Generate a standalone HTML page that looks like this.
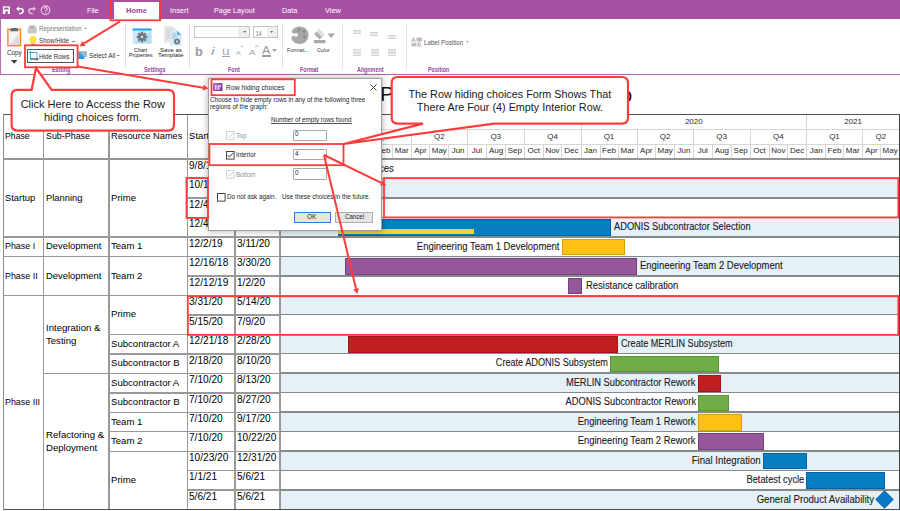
<!DOCTYPE html><html><head><meta charset="utf-8"><style>
*{margin:0;padding:0;box-sizing:border-box}
html,body{width:900px;height:511px;overflow:hidden;background:#fff;font-family:"Liberation Sans", sans-serif}
.a{position:absolute}
.t{position:absolute;white-space:nowrap;line-height:1}
</style></head><body><div class="a" style="left:0;top:0;width:900px;height:511px;overflow:hidden">
<div class="a" style="left:0.00px;top:0.00px;width:900.00px;height:18.60px;background:#A851A3"></div>
<div class="a" style="left:0.00px;top:18.60px;width:1.30px;height:56.00px;background:#B46FB0"></div>
<div class="a" style="left:0.00px;top:74.00px;width:900.00px;height:1.40px;background:#B066AC"></div>
<div class="a" style="left:114.00px;top:1.90px;width:44.50px;height:17.50px;background:#fff"></div>
<div class="a" style="left:114.00px;top:18.60px;width:44.50px;height:1.00px;background:#fff"></div>
<div class="t" style="left:86.90px;top:7.12px;font-size:7.6px;transform:scaleX(0.9481);transform-origin:0 0;color:#fff">File</div>
<div class="t" style="left:170.20px;top:7.12px;font-size:7.6px;transform:scaleX(0.9745);transform-origin:0 0;color:#fff">Insert</div>
<div class="t" style="left:214.20px;top:7.12px;font-size:7.6px;transform:scaleX(0.9575);transform-origin:0 0;color:#fff">Page Layout</div>
<div class="t" style="left:281.90px;top:7.12px;font-size:7.6px;transform:scaleX(0.9606);transform-origin:0 0;color:#fff">Data</div>
<div class="t" style="left:325.20px;top:7.12px;font-size:7.6px;transform:scaleX(0.9686);transform-origin:0 0;color:#fff">View</div>
<div class="t" style="left:125.90px;top:7.12px;font-size:7.6px;transform:scaleX(0.9861);transform-origin:0 0;font-weight:bold;color:#9C3F98">Home</div>
<svg class="a" style="left:0;top:0" width="60" height="18" viewBox="0 0 60 18">
<rect x="2.9" y="6.4" width="7.1" height="7.6" fill="#fff"/>
<rect x="4.3" y="7.6" width="4.2" height="1.9" fill="#A851A3"/>
<rect x="5.4" y="11.2" width="2.4" height="2.8" fill="#A851A3"/>
<g fill="none" stroke="#fff" stroke-width="1.5">
<path d="M18 8.8 h2.8 a2.3 2.3 0 0 1 0 4.6 h-1.6"/></g><path d="M16 8.8 L19 6.4 V11.2Z" fill="#fff"/>
<g fill="none" stroke="#E2C1DF" stroke-width="1.5"><path d="M34 8.8 h-2.8 a2.3 2.3 0 0 0 0 4.6 h1.6"/></g><path d="M36 8.8 L33 6.4 V11.2Z" fill="#E2C1DF"/>
<circle cx="45.5" cy="10.2" r="4.3" fill="none" stroke="#EBD3E9" stroke-width="1.1"/>
<path d="M44.1 9 a1.5 1.5 0 1 1 2.1 1.4 q-0.6 0.3 -0.6 1.1" fill="none" stroke="#EBD3E9" stroke-width="1.1"/><circle cx="45.6" cy="12.6" r="0.55" fill="#EBD3E9"/>
</svg>
<svg class="a" style="left:5px;top:26px" width="20" height="42" viewBox="0 0 20 42">
<rect x="2.9" y="3.2" width="12.6" height="16.5" fill="#F4F4F4" stroke="#F7861B" stroke-width="1.4"/>
<path d="M4.5 19 L14.5 7.5 V19 Z" fill="#DCDCDC"/>
<path d="M5.2 4.5 Q5.2 1.8 9.2 1.8 Q13.2 1.8 13.2 4.5 V5.2 H5.2Z" fill="#5B6B7B"/>
</svg>
<svg class="a" style="left:10.80px;top:60.10px" width="6.4" height="3.8"><path d="M0 0 H6.4 L3.2 3.8Z" fill="#3a3a3a"/></svg>
<div class="t" style="left:6.90px;top:48.66px;font-size:7.2px;transform:scaleX(0.8760);transform-origin:0 0;color:#333">Copy</div>
<svg class="a" style="left:26px;top:23px" width="12" height="12" viewBox="0 0 12 12">
<path d="M2 10.5 Q0.5 8 2 5.5 Q2.5 2 6 2 Q9.5 1.5 10.5 5 Q11.8 7.5 10 10.5Z" fill="#C9C9C9"/><path d="M4 3.5 h4 v2 h-4z" fill="#ADADAD"/>
</svg>
<div class="t" style="left:39.00px;top:24.76px;font-size:7.2px;transform:scaleX(0.8756);transform-origin:0 0;color:#777">Representation</div>
<svg class="a" style="left:83.70px;top:27.70px" width="3" height="1.8"><path d="M0 0 H3 L1.5 1.8Z" fill="#999"/></svg>
<svg class="a" style="left:28px;top:35px" width="10" height="12" viewBox="0 0 10 12">
<path d="M5 1 A3.6 3.6 0 0 1 7.5 7.3 V8.3 H2.5 V7.3 A3.6 3.6 0 0 1 5 1Z" fill="#FFE13D"/><rect x="3" y="8.6" width="4" height="2" fill="#8C8C8C"/>
</svg>
<div class="t" style="left:39.00px;top:37.36px;font-size:7.2px;transform:scaleX(0.8629);transform-origin:0 0;color:#333">Show/Hide</div>
<svg class="a" style="left:72.00px;top:40.60px" width="3" height="1.8"><path d="M0 0 H3 L1.5 1.8Z" fill="#666"/></svg>
<div class="a" style="left:27.00px;top:49.00px;width:47.00px;height:13.60px;border:1px solid #555;background:#fff"></div>
<svg class="a" style="left:28px;top:50px" width="11" height="11" viewBox="0 0 11 11">
<rect x="2.5" y="2.5" width="6.5" height="6.5" fill="none" stroke="#4A9FD8" stroke-width="0.9"/>
<path d="M0.8 2.5 h2 M2.5 0.8 v2" stroke="#4A9FD8" stroke-width="0.9"/>
<path d="M9 9 h1.5 M9 9 v1.5" stroke="#333" stroke-width="0.9"/><path d="M2.5 9 h6.5" stroke="#333" stroke-width="0.9"/>
</svg>
<div class="t" style="left:39.00px;top:52.56px;font-size:7.2px;transform:scaleX(0.8748);transform-origin:0 0;color:#333">Hide Rows</div>
<svg class="a" style="left:78px;top:51px" width="10" height="9" viewBox="0 0 10 9">
<rect x="0.5" y="0.5" width="8" height="7.5" fill="#23A0EE"/><path d="M0.5 0.5 h8 v7.5z" fill="#9FB4C4"/><rect x="6.5" y="6" width="2.5" height="2.5" fill="#fff"/>
</svg>
<div class="t" style="left:89.00px;top:51.96px;font-size:7.2px;transform:scaleX(0.8926);transform-origin:0 0;color:#333">Select All</div>
<svg class="a" style="left:117.30px;top:54.80px" width="2.6" height="1.6"><path d="M0 0 H2.6 L1.3 1.6Z" fill="#555"/></svg>
<div class="t" style="left:51.79px;top:67.43px;font-size:6.4px;transform:scaleX(0.8500);transform-origin:0 0;font-weight:bold;color:#9A45A2">Editing</div>
<div class="t" style="left:143.99px;top:67.43px;font-size:6.4px;transform:scaleX(0.8500);transform-origin:0 0;font-weight:bold;color:#9A45A2">Settings</div>
<div class="t" style="left:228.42px;top:67.43px;font-size:6.4px;transform:scaleX(0.8500);transform-origin:0 0;font-weight:bold;color:#9A45A2">Font</div>
<div class="t" style="left:300.40px;top:67.43px;font-size:6.4px;transform:scaleX(0.8500);transform-origin:0 0;font-weight:bold;color:#9A45A2">Format</div>
<div class="t" style="left:357.42px;top:67.43px;font-size:6.4px;transform:scaleX(0.8500);transform-origin:0 0;font-weight:bold;color:#9A45A2">Alignment</div>
<div class="t" style="left:428.28px;top:67.43px;font-size:6.4px;transform:scaleX(0.8500);transform-origin:0 0;font-weight:bold;color:#9A45A2">Position</div>
<div class="a" style="left:125.00px;top:24.00px;width:0.80px;height:45.00px;background:#E3E3E3"></div>
<div class="a" style="left:188.60px;top:24.00px;width:0.80px;height:45.00px;background:#E3E3E3"></div>
<div class="a" style="left:282.30px;top:24.00px;width:0.80px;height:45.00px;background:#E3E3E3"></div>
<div class="a" style="left:341.60px;top:24.00px;width:0.80px;height:45.00px;background:#E3E3E3"></div>
<div class="a" style="left:405.60px;top:24.00px;width:0.80px;height:45.00px;background:#E3E3E3"></div>
<svg class="a" style="left:131.5px;top:27.5px" width="20" height="16" viewBox="0 0 20 16">
<rect x="0.5" y="0.5" width="19" height="15" fill="#CDEBFA"/><path d="M0.5 15.5 L19.5 3 V15.5Z" fill="#B3DFF6"/><rect x="0.5" y="0.5" width="19" height="2" fill="#1EA5EC"/>
<g transform="translate(10 9)"><g fill="#6E7881">
<rect x="-1.2" y="-5.3" width="2.4" height="10.6"/><rect x="-1.2" y="-5.3" width="2.4" height="10.6" transform="rotate(45)"/>
<rect x="-1.2" y="-5.3" width="2.4" height="10.6" transform="rotate(90)"/><rect x="-1.2" y="-5.3" width="2.4" height="10.6" transform="rotate(135)"/>
<circle r="3.6"/></g><circle r="1.2" fill="#CDEBFA"/></g>
</svg>
<div class="t" style="left:133.80px;top:46.50px;font-size:6.2px;transform:scaleX(0.8793);transform-origin:0 0;color:#222">Chart</div>
<div class="t" style="left:128.70px;top:51.80px;font-size:6.2px;transform:scaleX(0.8337);transform-origin:0 0;color:#222">Properties</div>
<svg class="a" style="left:163px;top:25px" width="20" height="21" viewBox="0 0 20 21">
<path d="M1 1 h8.5 l3 3 v13.5 h-11.5z" fill="#E6E6E6"/><g stroke="#C4C4C4" stroke-width="0.7"><path d="M3 5h6M3 7h6M3 9h6M3 11h6M3 13h6"/></g>
<path d="M7 5.5 h7 l4.5 4.5 v10.5 h-11.5z" fill="#CFEAF8"/><path d="M14 5.5 l4.5 4.5 h-4.5z" fill="#4DB3EA"/>
<g stroke="#9AA7B0" stroke-width="0.7"><path d="M9 9h4M9 11h5M9 13h3"/></g>
<circle cx="14" cy="16.5" r="3" fill="#707B84"/><circle cx="14" cy="16.5" r="1.1" fill="#CFEAF8"/>
</svg>
<div class="t" style="left:159.50px;top:46.50px;font-size:6.2px;transform:scaleX(0.9757);transform-origin:0 0;color:#222">Save as</div>
<div class="t" style="left:157.80px;top:51.80px;font-size:6.2px;transform:scaleX(1.0122);transform-origin:0 0;color:#222">Template</div>
<div class="a" style="left:194.00px;top:26.30px;width:55.70px;height:11.70px;border:1px solid #C6C6C6;background:#fff"></div>
<div class="a" style="left:238.00px;top:27.30px;width:10.70px;height:9.70px;background:#F0F0F0"></div>
<svg class="a" style="left:242.70px;top:31.25px" width="3.2" height="1.9"><path d="M0 0 H3.2 L1.6 1.9Z" fill="#777"/></svg>
<div class="a" style="left:253.00px;top:26.30px;width:24.70px;height:11.70px;border:1px solid #C6C6C6;background:#fff"></div>
<div class="a" style="left:266.50px;top:27.30px;width:10.20px;height:9.70px;background:#F0F0F0"></div>
<svg class="a" style="left:270.40px;top:31.25px" width="3.2" height="1.9"><path d="M0 0 H3.2 L1.6 1.9Z" fill="#777"/></svg>
<div class="t" style="left:255.80px;top:29.52px;font-size:7px;transform:scaleX(0.7325);transform-origin:0 0;color:#777">14</div>
<div class="t" style="left:195.20px;top:45.57px;font-size:12.5px;transform:scaleX(1.0209);transform-origin:0 0;font-weight:bold;color:#9B9B9B">b</div>
<div class="t" style="left:210.80px;top:46.22px;font-size:11.5px;transform:scaleX(1.4439);transform-origin:0 0;color:#A6A6A6;font-style:italic">i</div>
<div class="t" style="left:222.00px;top:45.64px;font-size:11px;transform:scaleX(1.2245);transform-origin:0 0;color:#A6A6A6">u</div>
<div class="a" style="left:222.00px;top:55.70px;width:7.50px;height:1.00px;background:#A6A6A6"></div>
<div class="t" style="left:236.30px;top:50.79px;font-size:5.5px;transform:scaleX(1.2800);transform-origin:0 0;color:#A6A6A6">A</div>
<svg class="a" style="left:240.55px;top:45.50px" width="2.5" height="1.6"><path d="M0 0 H2.5 L1.25 1.6Z" fill="#A6A6A6"/></svg>
<div class="t" style="left:248.80px;top:48.68px;font-size:8px;transform:scaleX(1.2538);transform-origin:0 0;color:#A6A6A6">A</div>
<svg class="a" style="left:254.5px;top:44.5px" width="4" height="3"><path d="M0 2.5 L2 0.5 L4 2.5" fill="none" stroke="#A6A6A6" stroke-width="0.9"/></svg>
<div class="t" style="left:261.80px;top:45.14px;font-size:11px;transform:scaleX(1.1166);transform-origin:0 0;color:#9B9B9B">A</div>
<div class="a" style="left:261.50px;top:55.30px;width:9.20px;height:1.80px;background:#A0A0A0"></div>
<svg class="a" style="left:271.90px;top:48.60px" width="5" height="3.2"><path d="M0 0 H5 L2.5 3.2Z" fill="#A6A6A6"/></svg>
<svg class="a" style="left:290px;top:25px" width="20" height="21" viewBox="0 0 20 21">
<path d="M10 1.5 C15 1.5 18.5 5.5 18.5 10 C18.5 15.5 14.5 19 10 19 C5 19 1.5 15.5 1.5 13 C1.5 10.8 5 11 5 9.5 C5 8 1.8 8.8 1.8 7 C1.8 4 5.5 1.5 10 1.5Z" fill="#A8A8A8"/>
<circle cx="6" cy="10" r="1.8" fill="#fff"/><circle cx="9" cy="5" r="1.4" fill="#8A8A8A"/><circle cx="14" cy="6.5" r="1.4" fill="#8A8A8A"/><circle cx="14.5" cy="12" r="1.4" fill="#8A8A8A"/>
</svg>
<div class="t" style="left:287.00px;top:47.20px;font-size:6.2px;transform:scaleX(0.8889);transform-origin:0 0;color:#333">Format...</div>
<svg class="a" style="left:313px;top:28px" width="23" height="17" viewBox="0 0 23 17">
<path d="M6 1 l5.5 5.5 l-5 5 l-5.5 -5.5z" fill="#B0B0B0"/><path d="M6 1 l5.5 5.5 l-2.5 2.5 l-5.5-5.5z" fill="#E2E2E2"/>
<rect x="1" y="12" width="11.5" height="3.2" fill="#A8A8A8"/>
<path d="M14.5 5.5 h7.5 l-3.75 4.5z" fill="#A8A8A8"/>
</svg>
<div class="t" style="left:317.30px;top:47.20px;font-size:6.2px;transform:scaleX(0.8592);transform-origin:0 0;color:#333">Color</div>
<svg class="a" style="left:353px;top:29.5px" width="8" height="4.5"><rect x="0" y="0.0" width="8" height="0.9" fill="#CFCFCF"/><rect x="0" y="1.5" width="8" height="0.9" fill="#CFCFCF"/><rect x="0" y="3.0" width="8" height="0.9" fill="#CFCFCF"/></svg>
<svg class="a" style="left:370px;top:32px" width="8" height="4.5"><rect x="0" y="0.0" width="8" height="0.9" fill="#CFCFCF"/><rect x="0" y="1.5" width="8" height="0.9" fill="#CFCFCF"/><rect x="0" y="3.0" width="8" height="0.9" fill="#CFCFCF"/></svg>
<svg class="a" style="left:388px;top:34.5px" width="8" height="4.5"><rect x="0" y="0.0" width="8" height="0.9" fill="#CFCFCF"/><rect x="0" y="1.5" width="8" height="0.9" fill="#CFCFCF"/><rect x="0" y="3.0" width="8" height="0.9" fill="#CFCFCF"/></svg>
<svg class="a" style="left:353px;top:49px" width="8" height="7.5"><rect x="0" y="0.0" width="8" height="0.9" fill="#CFCFCF"/><rect x="0" y="1.5" width="8" height="0.9" fill="#CFCFCF"/><rect x="0" y="3.0" width="8" height="0.9" fill="#CFCFCF"/><rect x="0" y="4.5" width="8" height="0.9" fill="#CFCFCF"/><rect x="0" y="6.0" width="8" height="0.9" fill="#CFCFCF"/></svg>
<svg class="a" style="left:371px;top:49px" width="8" height="7.5"><rect x="0" y="0.0" width="8" height="0.9" fill="#CFCFCF"/><rect x="0" y="1.5" width="8" height="0.9" fill="#CFCFCF"/><rect x="0" y="3.0" width="8" height="0.9" fill="#CFCFCF"/><rect x="0" y="4.5" width="8" height="0.9" fill="#CFCFCF"/><rect x="0" y="6.0" width="8" height="0.9" fill="#CFCFCF"/></svg>
<svg class="a" style="left:388px;top:49px" width="8" height="7.5"><rect x="0" y="0.0" width="8" height="0.9" fill="#CFCFCF"/><rect x="0" y="1.5" width="8" height="0.9" fill="#CFCFCF"/><rect x="0" y="3.0" width="8" height="0.9" fill="#CFCFCF"/><rect x="0" y="4.5" width="8" height="0.9" fill="#CFCFCF"/><rect x="0" y="6.0" width="8" height="0.9" fill="#CFCFCF"/></svg>
<svg class="a" style="left:410.5px;top:37px" width="12" height="10" viewBox="0 0 12 10">
<path d="M0.5 5 L2.5 0.5 L4.5 5 M1.3 3.3 h2.4" fill="none" stroke="#9A9A9A" stroke-width="0.7"/><rect x="5.5" y="0.5" width="5.5" height="4" fill="#BDBDBD"/>
<rect x="0.5" y="5.8" width="5" height="3.6" fill="#BDBDBD"/><path d="M7 5.6 v4 h1.8 a1 1 0 0 0 0 -2 h-1.8 h1.5 a0.9 0.9 0 0 0 0 -2z" fill="none" stroke="#9A9A9A" stroke-width="0.6"/>
</svg>
<div class="t" style="left:423.70px;top:39.12px;font-size:7px;transform:scaleX(0.8915);transform-origin:0 0;color:#555">Label Position</div>
<svg class="a" style="left:465.90px;top:41.20px" width="2.6" height="1.6"><path d="M0 0 H2.6 L1.3 1.6Z" fill="#888"/></svg>
<div class="t" style="left:380.00px;top:83.00px;font-size:21px;color:#111">P</div>
<div class="t" style="left:620.50px;top:83.50px;font-size:21px;color:#111">o</div>
<div class="a" style="left:280.00px;top:178.47px;width:619.00px;height:19.47px;background:#E5F0F7"></div>
<div class="a" style="left:280.00px;top:217.41px;width:619.00px;height:19.47px;background:#E5F0F7"></div>
<div class="a" style="left:280.00px;top:256.35px;width:619.00px;height:19.47px;background:#E5F0F7"></div>
<div class="a" style="left:280.00px;top:295.29px;width:619.00px;height:19.47px;background:#E5F0F7"></div>
<div class="a" style="left:280.00px;top:334.23px;width:619.00px;height:19.47px;background:#E5F0F7"></div>
<div class="a" style="left:280.00px;top:373.17px;width:619.00px;height:19.47px;background:#E5F0F7"></div>
<div class="a" style="left:280.00px;top:412.11px;width:619.00px;height:19.47px;background:#E5F0F7"></div>
<div class="a" style="left:280.00px;top:451.05px;width:619.00px;height:19.47px;background:#E5F0F7"></div>
<div class="a" style="left:280.00px;top:489.99px;width:619.00px;height:19.47px;background:#E5F0F7"></div>
<div class="a" style="left:280.00px;top:129.30px;width:619.00px;height:0.90px;background:#D6D6D6"></div>
<div class="a" style="left:280.00px;top:144.00px;width:619.00px;height:0.90px;background:#D6D6D6"></div>
<div class="t" style="left:280.00px;top:147.30px;font-size:8px;color:#2A2A2A"><div style="width:18.94px;text-align:center">Sep</div></div>
<div class="a" style="left:298.54px;top:129.30px;width:0.90px;height:29.70px;background:#D6D6D6"></div>
<div class="t" style="left:298.94px;top:147.30px;font-size:8px;color:#2A2A2A"><div style="width:19.13px;text-align:center">Oct</div></div>
<div class="a" style="left:317.66px;top:144.00px;width:0.90px;height:15.00px;background:#D6D6D6"></div>
<div class="t" style="left:318.06px;top:147.30px;font-size:8px;color:#2A2A2A"><div style="width:18.51px;text-align:center">Nov</div></div>
<div class="a" style="left:336.17px;top:144.00px;width:0.90px;height:15.00px;background:#D6D6D6"></div>
<div class="t" style="left:336.57px;top:147.30px;font-size:8px;color:#2A2A2A"><div style="width:19.13px;text-align:center">Dec</div></div>
<div class="a" style="left:355.30px;top:114.50px;width:0.90px;height:44.50px;background:#D6D6D6"></div>
<div class="t" style="left:355.70px;top:147.30px;font-size:8px;color:#2A2A2A"><div style="width:19.13px;text-align:center">Jan</div></div>
<div class="a" style="left:374.43px;top:144.00px;width:0.90px;height:15.00px;background:#D6D6D6"></div>
<div class="t" style="left:374.83px;top:147.30px;font-size:8px;color:#2A2A2A"><div style="width:17.28px;text-align:center">Feb</div></div>
<div class="a" style="left:391.70px;top:144.00px;width:0.90px;height:15.00px;background:#D6D6D6"></div>
<div class="t" style="left:392.10px;top:147.30px;font-size:8px;color:#2A2A2A"><div style="width:19.13px;text-align:center">Mar</div></div>
<div class="a" style="left:410.83px;top:129.30px;width:0.90px;height:29.70px;background:#D6D6D6"></div>
<div class="t" style="left:411.23px;top:147.30px;font-size:8px;color:#2A2A2A"><div style="width:18.51px;text-align:center">Apr</div></div>
<div class="a" style="left:429.34px;top:144.00px;width:0.90px;height:15.00px;background:#D6D6D6"></div>
<div class="t" style="left:429.74px;top:147.30px;font-size:8px;color:#2A2A2A"><div style="width:19.13px;text-align:center">May</div></div>
<div class="a" style="left:448.46px;top:144.00px;width:0.90px;height:15.00px;background:#D6D6D6"></div>
<div class="t" style="left:448.86px;top:147.30px;font-size:8px;color:#2A2A2A"><div style="width:18.51px;text-align:center">Jun</div></div>
<div class="a" style="left:466.97px;top:129.30px;width:0.90px;height:29.70px;background:#D6D6D6"></div>
<div class="t" style="left:467.37px;top:147.30px;font-size:8px;color:#2A2A2A"><div style="width:19.13px;text-align:center">Jul</div></div>
<div class="a" style="left:486.10px;top:144.00px;width:0.90px;height:15.00px;background:#D6D6D6"></div>
<div class="t" style="left:486.50px;top:147.30px;font-size:8px;color:#2A2A2A"><div style="width:19.13px;text-align:center">Aug</div></div>
<div class="a" style="left:505.23px;top:144.00px;width:0.90px;height:15.00px;background:#D6D6D6"></div>
<div class="t" style="left:505.63px;top:147.30px;font-size:8px;color:#2A2A2A"><div style="width:18.51px;text-align:center">Sep</div></div>
<div class="a" style="left:523.74px;top:129.30px;width:0.90px;height:29.70px;background:#D6D6D6"></div>
<div class="t" style="left:524.14px;top:147.30px;font-size:8px;color:#2A2A2A"><div style="width:19.13px;text-align:center">Oct</div></div>
<div class="a" style="left:542.86px;top:144.00px;width:0.90px;height:15.00px;background:#D6D6D6"></div>
<div class="t" style="left:543.26px;top:147.30px;font-size:8px;color:#2A2A2A"><div style="width:18.51px;text-align:center">Nov</div></div>
<div class="a" style="left:561.37px;top:144.00px;width:0.90px;height:15.00px;background:#D6D6D6"></div>
<div class="t" style="left:561.77px;top:147.30px;font-size:8px;color:#2A2A2A"><div style="width:19.13px;text-align:center">Dec</div></div>
<div class="a" style="left:580.50px;top:114.50px;width:0.90px;height:44.50px;background:#D6D6D6"></div>
<div class="t" style="left:580.90px;top:147.30px;font-size:8px;color:#2A2A2A"><div style="width:19.13px;text-align:center">Jan</div></div>
<div class="a" style="left:599.63px;top:144.00px;width:0.90px;height:15.00px;background:#D6D6D6"></div>
<div class="t" style="left:600.03px;top:147.30px;font-size:8px;color:#2A2A2A"><div style="width:17.89px;text-align:center">Feb</div></div>
<div class="a" style="left:617.52px;top:144.00px;width:0.90px;height:15.00px;background:#D6D6D6"></div>
<div class="t" style="left:617.92px;top:147.30px;font-size:8px;color:#2A2A2A"><div style="width:19.13px;text-align:center">Mar</div></div>
<div class="a" style="left:636.65px;top:129.30px;width:0.90px;height:29.70px;background:#D6D6D6"></div>
<div class="t" style="left:637.05px;top:147.30px;font-size:8px;color:#2A2A2A"><div style="width:18.51px;text-align:center">Apr</div></div>
<div class="a" style="left:655.16px;top:144.00px;width:0.90px;height:15.00px;background:#D6D6D6"></div>
<div class="t" style="left:655.56px;top:147.30px;font-size:8px;color:#2A2A2A"><div style="width:19.13px;text-align:center">May</div></div>
<div class="a" style="left:674.28px;top:144.00px;width:0.90px;height:15.00px;background:#D6D6D6"></div>
<div class="t" style="left:674.68px;top:147.30px;font-size:8px;color:#2A2A2A"><div style="width:18.51px;text-align:center">Jun</div></div>
<div class="a" style="left:692.79px;top:129.30px;width:0.90px;height:29.70px;background:#D6D6D6"></div>
<div class="t" style="left:693.19px;top:147.30px;font-size:8px;color:#2A2A2A"><div style="width:19.13px;text-align:center">Jul</div></div>
<div class="a" style="left:711.92px;top:144.00px;width:0.90px;height:15.00px;background:#D6D6D6"></div>
<div class="t" style="left:712.32px;top:147.30px;font-size:8px;color:#2A2A2A"><div style="width:19.13px;text-align:center">Aug</div></div>
<div class="a" style="left:731.04px;top:144.00px;width:0.90px;height:15.00px;background:#D6D6D6"></div>
<div class="t" style="left:731.44px;top:147.30px;font-size:8px;color:#2A2A2A"><div style="width:18.51px;text-align:center">Sep</div></div>
<div class="a" style="left:749.55px;top:129.30px;width:0.90px;height:29.70px;background:#D6D6D6"></div>
<div class="t" style="left:749.95px;top:147.30px;font-size:8px;color:#2A2A2A"><div style="width:19.13px;text-align:center">Oct</div></div>
<div class="a" style="left:768.68px;top:144.00px;width:0.90px;height:15.00px;background:#D6D6D6"></div>
<div class="t" style="left:769.08px;top:147.30px;font-size:8px;color:#2A2A2A"><div style="width:18.51px;text-align:center">Nov</div></div>
<div class="a" style="left:787.19px;top:144.00px;width:0.90px;height:15.00px;background:#D6D6D6"></div>
<div class="t" style="left:787.59px;top:147.30px;font-size:8px;color:#2A2A2A"><div style="width:19.13px;text-align:center">Dec</div></div>
<div class="a" style="left:806.32px;top:114.50px;width:0.90px;height:44.50px;background:#D6D6D6"></div>
<div class="t" style="left:806.72px;top:147.30px;font-size:8px;color:#2A2A2A"><div style="width:19.13px;text-align:center">Jan</div></div>
<div class="a" style="left:825.44px;top:144.00px;width:0.90px;height:15.00px;background:#D6D6D6"></div>
<div class="t" style="left:825.84px;top:147.30px;font-size:8px;color:#2A2A2A"><div style="width:17.28px;text-align:center">Feb</div></div>
<div class="a" style="left:842.72px;top:144.00px;width:0.90px;height:15.00px;background:#D6D6D6"></div>
<div class="t" style="left:843.12px;top:147.30px;font-size:8px;color:#2A2A2A"><div style="width:19.13px;text-align:center">Mar</div></div>
<div class="a" style="left:861.85px;top:129.30px;width:0.90px;height:29.70px;background:#D6D6D6"></div>
<div class="t" style="left:862.25px;top:147.30px;font-size:8px;color:#2A2A2A"><div style="width:18.51px;text-align:center">Apr</div></div>
<div class="a" style="left:880.36px;top:144.00px;width:0.90px;height:15.00px;background:#D6D6D6"></div>
<div class="t" style="left:880.76px;top:147.30px;font-size:8px;color:#2A2A2A"><div style="width:18.74px;text-align:center">May</div></div>
<div class="t" style="left:280.00px;top:132.60px;font-size:8px;color:#2A2A2A"><div style="width:18.94px;text-align:center">Q3</div></div>
<div class="t" style="left:298.94px;top:132.60px;font-size:8px;color:#2A2A2A"><div style="width:56.76px;text-align:center">Q4</div></div>
<div class="t" style="left:280.00px;top:118.00px;font-size:8px;color:#2A2A2A"><div style="width:75.70px;text-align:center">2018</div></div>
<div class="t" style="left:355.70px;top:132.60px;font-size:8px;color:#2A2A2A"><div style="width:55.53px;text-align:center">Q1</div></div>
<div class="t" style="left:411.23px;top:132.60px;font-size:8px;color:#2A2A2A"><div style="width:56.15px;text-align:center">Q2</div></div>
<div class="t" style="left:467.37px;top:132.60px;font-size:8px;color:#2A2A2A"><div style="width:56.76px;text-align:center">Q3</div></div>
<div class="t" style="left:524.14px;top:132.60px;font-size:8px;color:#2A2A2A"><div style="width:56.76px;text-align:center">Q4</div></div>
<div class="t" style="left:355.70px;top:118.00px;font-size:8px;color:#2A2A2A"><div style="width:225.20px;text-align:center">2019</div></div>
<div class="t" style="left:580.90px;top:132.60px;font-size:8px;color:#2A2A2A"><div style="width:56.15px;text-align:center">Q1</div></div>
<div class="t" style="left:637.05px;top:132.60px;font-size:8px;color:#2A2A2A"><div style="width:56.15px;text-align:center">Q2</div></div>
<div class="t" style="left:693.19px;top:132.60px;font-size:8px;color:#2A2A2A"><div style="width:56.76px;text-align:center">Q3</div></div>
<div class="t" style="left:749.95px;top:132.60px;font-size:8px;color:#2A2A2A"><div style="width:56.76px;text-align:center">Q4</div></div>
<div class="t" style="left:580.90px;top:118.00px;font-size:8px;color:#2A2A2A"><div style="width:225.82px;text-align:center">2020</div></div>
<div class="t" style="left:806.72px;top:132.60px;font-size:8px;color:#2A2A2A"><div style="width:55.53px;text-align:center">Q1</div></div>
<div class="t" style="left:862.25px;top:132.60px;font-size:8px;color:#2A2A2A"><div style="width:37.25px;text-align:center">Q2</div></div>
<div class="t" style="left:806.72px;top:118.00px;font-size:8px;color:#2A2A2A"><div style="width:92.78px;text-align:center">2021</div></div>
<div class="a" style="left:3.00px;top:113.90px;width:897.00px;height:1.20px;background:#505050"></div>
<div class="a" style="left:3.00px;top:508.70px;width:897.00px;height:1.30px;background:#505050"></div>
<div class="a" style="left:2.70px;top:113.90px;width:1.20px;height:396.50px;background:#8A8A8A"></div>
<div class="a" style="left:898.80px;top:113.90px;width:1.60px;height:396.50px;background:#404040"></div>
<div class="a" style="left:3.00px;top:158.30px;width:896.00px;height:1.40px;background:#959595"></div>
<div class="a" style="left:42.80px;top:114.50px;width:1.40px;height:394.90px;background:#999"></div>
<div class="a" style="left:108.30px;top:114.50px;width:1.40px;height:394.90px;background:#999"></div>
<div class="a" style="left:186.80px;top:114.50px;width:1.40px;height:394.90px;background:#999"></div>
<div class="a" style="left:234.30px;top:114.50px;width:1.40px;height:394.90px;background:#999"></div>
<div class="a" style="left:279.30px;top:114.50px;width:1.40px;height:394.90px;background:#999"></div>
<div class="a" style="left:187.50px;top:177.97px;width:92.50px;height:1.40px;background:#999"></div>
<div class="a" style="left:280.00px;top:177.77px;width:619.00px;height:1.40px;background:#858A8A"></div>
<div class="a" style="left:187.50px;top:197.44px;width:92.50px;height:1.40px;background:#999"></div>
<div class="a" style="left:280.00px;top:197.24px;width:619.00px;height:1.40px;background:#858A8A"></div>
<div class="a" style="left:187.50px;top:216.91px;width:92.50px;height:1.40px;background:#999"></div>
<div class="a" style="left:280.00px;top:216.71px;width:619.00px;height:1.40px;background:#858A8A"></div>
<div class="a" style="left:3.00px;top:236.38px;width:40.50px;height:1.40px;background:#999"></div>
<div class="a" style="left:43.50px;top:236.38px;width:65.50px;height:1.40px;background:#999"></div>
<div class="a" style="left:109.00px;top:236.38px;width:78.50px;height:1.40px;background:#999"></div>
<div class="a" style="left:187.50px;top:236.38px;width:92.50px;height:1.40px;background:#999"></div>
<div class="a" style="left:280.00px;top:236.18px;width:619.00px;height:1.40px;background:#858A8A"></div>
<div class="a" style="left:3.00px;top:255.85px;width:40.50px;height:1.40px;background:#999"></div>
<div class="a" style="left:43.50px;top:255.85px;width:65.50px;height:1.40px;background:#999"></div>
<div class="a" style="left:109.00px;top:255.85px;width:78.50px;height:1.40px;background:#999"></div>
<div class="a" style="left:187.50px;top:255.85px;width:92.50px;height:1.40px;background:#999"></div>
<div class="a" style="left:280.00px;top:255.65px;width:619.00px;height:1.40px;background:#858A8A"></div>
<div class="a" style="left:187.50px;top:275.32px;width:92.50px;height:1.40px;background:#999"></div>
<div class="a" style="left:280.00px;top:275.12px;width:619.00px;height:1.40px;background:#858A8A"></div>
<div class="a" style="left:3.00px;top:294.79px;width:40.50px;height:1.40px;background:#999"></div>
<div class="a" style="left:43.50px;top:294.79px;width:65.50px;height:1.40px;background:#999"></div>
<div class="a" style="left:109.00px;top:294.79px;width:78.50px;height:1.40px;background:#999"></div>
<div class="a" style="left:187.50px;top:294.79px;width:92.50px;height:1.40px;background:#999"></div>
<div class="a" style="left:280.00px;top:294.59px;width:619.00px;height:1.40px;background:#858A8A"></div>
<div class="a" style="left:187.50px;top:314.26px;width:92.50px;height:1.40px;background:#999"></div>
<div class="a" style="left:280.00px;top:314.06px;width:619.00px;height:1.40px;background:#858A8A"></div>
<div class="a" style="left:109.00px;top:333.73px;width:78.50px;height:1.40px;background:#999"></div>
<div class="a" style="left:187.50px;top:333.73px;width:92.50px;height:1.40px;background:#999"></div>
<div class="a" style="left:280.00px;top:333.53px;width:619.00px;height:1.40px;background:#858A8A"></div>
<div class="a" style="left:109.00px;top:353.20px;width:78.50px;height:1.40px;background:#999"></div>
<div class="a" style="left:187.50px;top:353.20px;width:92.50px;height:1.40px;background:#999"></div>
<div class="a" style="left:280.00px;top:353.00px;width:619.00px;height:1.40px;background:#858A8A"></div>
<div class="a" style="left:43.50px;top:372.67px;width:65.50px;height:1.40px;background:#999"></div>
<div class="a" style="left:109.00px;top:372.67px;width:78.50px;height:1.40px;background:#999"></div>
<div class="a" style="left:187.50px;top:372.67px;width:92.50px;height:1.40px;background:#999"></div>
<div class="a" style="left:280.00px;top:372.47px;width:619.00px;height:1.40px;background:#858A8A"></div>
<div class="a" style="left:109.00px;top:392.14px;width:78.50px;height:1.40px;background:#999"></div>
<div class="a" style="left:187.50px;top:392.14px;width:92.50px;height:1.40px;background:#999"></div>
<div class="a" style="left:280.00px;top:391.94px;width:619.00px;height:1.40px;background:#858A8A"></div>
<div class="a" style="left:109.00px;top:411.61px;width:78.50px;height:1.40px;background:#999"></div>
<div class="a" style="left:187.50px;top:411.61px;width:92.50px;height:1.40px;background:#999"></div>
<div class="a" style="left:280.00px;top:411.41px;width:619.00px;height:1.40px;background:#858A8A"></div>
<div class="a" style="left:109.00px;top:431.08px;width:78.50px;height:1.40px;background:#999"></div>
<div class="a" style="left:187.50px;top:431.08px;width:92.50px;height:1.40px;background:#999"></div>
<div class="a" style="left:280.00px;top:430.88px;width:619.00px;height:1.40px;background:#858A8A"></div>
<div class="a" style="left:109.00px;top:450.55px;width:78.50px;height:1.40px;background:#999"></div>
<div class="a" style="left:187.50px;top:450.55px;width:92.50px;height:1.40px;background:#999"></div>
<div class="a" style="left:280.00px;top:450.35px;width:619.00px;height:1.40px;background:#858A8A"></div>
<div class="a" style="left:187.50px;top:470.02px;width:92.50px;height:1.40px;background:#999"></div>
<div class="a" style="left:280.00px;top:469.82px;width:619.00px;height:1.40px;background:#858A8A"></div>
<div class="a" style="left:187.50px;top:489.49px;width:92.50px;height:1.40px;background:#999"></div>
<div class="a" style="left:280.00px;top:489.29px;width:619.00px;height:1.40px;background:#858A8A"></div>
<div class="t" style="left:5.00px;top:131.43px;font-size:9.95px;transform:scaleX(0.8744);transform-origin:0 0;color:#000">Phase</div>
<div class="t" style="left:45.60px;top:131.43px;font-size:9.95px;transform:scaleX(0.8945);transform-origin:0 0;color:#000">Sub-Phase</div>
<div class="t" style="left:110.80px;top:131.43px;font-size:9.95px;transform:scaleX(0.9296);transform-origin:0 0;color:#000">Resource Names</div>
<div class="t" style="left:189.30px;top:131.43px;font-size:9.95px;transform:scaleX(0.9648);transform-origin:0 0;color:#000">Start Date</div>
<div class="t" style="left:236.60px;top:131.43px;font-size:9.95px;transform:scaleX(0.9648);transform-origin:0 0;color:#000">End Date</div>
<div class="t" style="left:4.80px;top:192.67px;font-size:9.95px;transform:scaleX(0.9447);transform-origin:0 0;color:#000">Startup</div>
<div class="t" style="left:4.80px;top:241.34px;font-size:9.95px;transform:scaleX(0.8945);transform-origin:0 0;color:#000">Phase I</div>
<div class="t" style="left:4.80px;top:270.55px;font-size:9.95px;transform:scaleX(0.8945);transform-origin:0 0;color:#000">Phase II</div>
<div class="t" style="left:4.80px;top:397.10px;font-size:9.95px;transform:scaleX(0.8945);transform-origin:0 0;color:#000">Phase III</div>
<div class="t" style="left:45.60px;top:192.67px;font-size:9.95px;transform:scaleX(0.9447);transform-origin:0 0;color:#000">Planning</div>
<div class="t" style="left:45.60px;top:241.34px;font-size:9.95px;transform:scaleX(0.9447);transform-origin:0 0;color:#000">Development</div>
<div class="t" style="left:45.60px;top:270.55px;font-size:9.95px;transform:scaleX(0.9447);transform-origin:0 0;color:#000">Development</div>
<div class="t" style="left:45.60px;top:323.26px;font-size:9.95px;transform:scaleX(0.9648);transform-origin:0 0;color:#000">Integration &amp;</div>
<div class="t" style="left:45.60px;top:335.86px;font-size:9.95px;transform:scaleX(0.9648);transform-origin:0 0;color:#000">Testing</div>
<div class="t" style="left:45.60px;top:430.34px;font-size:9.95px;transform:scaleX(0.9648);transform-origin:0 0;color:#000">Refactoring &amp;</div>
<div class="t" style="left:45.60px;top:442.94px;font-size:9.95px;transform:scaleX(0.9648);transform-origin:0 0;color:#000">Deployment</div>
<div class="t" style="left:110.80px;top:192.67px;font-size:9.95px;transform:scaleX(0.9648);transform-origin:0 0;color:#000">Prime</div>
<div class="t" style="left:110.80px;top:241.34px;font-size:9.95px;transform:scaleX(0.9648);transform-origin:0 0;color:#000">Team 1</div>
<div class="t" style="left:110.80px;top:270.55px;font-size:9.95px;transform:scaleX(0.9648);transform-origin:0 0;color:#000">Team 2</div>
<div class="t" style="left:110.80px;top:309.49px;font-size:9.95px;transform:scaleX(0.9648);transform-origin:0 0;color:#000">Prime</div>
<div class="t" style="left:110.80px;top:338.69px;font-size:9.95px;transform:scaleX(0.9648);transform-origin:0 0;color:#000">Subcontractor A</div>
<div class="t" style="left:110.80px;top:358.16px;font-size:9.95px;transform:scaleX(0.9648);transform-origin:0 0;color:#000">Subcontractor B</div>
<div class="t" style="left:110.80px;top:377.63px;font-size:9.95px;transform:scaleX(0.9648);transform-origin:0 0;color:#000">Subcontractor A</div>
<div class="t" style="left:110.80px;top:397.10px;font-size:9.95px;transform:scaleX(0.9648);transform-origin:0 0;color:#000">Subcontractor B</div>
<div class="t" style="left:110.80px;top:416.57px;font-size:9.95px;transform:scaleX(0.9648);transform-origin:0 0;color:#000">Team 1</div>
<div class="t" style="left:110.80px;top:436.04px;font-size:9.95px;transform:scaleX(0.9648);transform-origin:0 0;color:#000">Team 2</div>
<div class="t" style="left:110.80px;top:474.98px;font-size:9.95px;transform:scaleX(0.9648);transform-origin:0 0;color:#000">Prime</div>
<div class="t" style="left:189.20px;top:159.88px;font-size:10.6px;transform:scaleX(0.9528);transform-origin:0 0;color:#000">9/8/18</div>
<div class="t" style="left:236.60px;top:159.88px;font-size:10.6px;transform:scaleX(0.9528);transform-origin:0 0;color:#000">10/1/18</div>
<div class="t" style="left:189.20px;top:179.35px;font-size:10.6px;transform:scaleX(0.9528);transform-origin:0 0;color:#000">10/1/18</div>
<div class="t" style="left:236.60px;top:179.35px;font-size:10.6px;transform:scaleX(0.9528);transform-origin:0 0;color:#000">12/3/18</div>
<div class="t" style="left:189.20px;top:198.82px;font-size:10.6px;transform:scaleX(0.9528);transform-origin:0 0;color:#000">12/4/18</div>
<div class="t" style="left:236.60px;top:198.82px;font-size:10.6px;transform:scaleX(0.9528);transform-origin:0 0;color:#000">12/20/18</div>
<div class="t" style="left:189.20px;top:218.29px;font-size:10.6px;transform:scaleX(0.9528);transform-origin:0 0;color:#000">12/4/18</div>
<div class="t" style="left:236.60px;top:218.29px;font-size:10.6px;transform:scaleX(0.9528);transform-origin:0 0;color:#000">2/17/20</div>
<div class="t" style="left:189.20px;top:237.76px;font-size:10.6px;transform:scaleX(0.9528);transform-origin:0 0;color:#000">12/2/19</div>
<div class="t" style="left:236.60px;top:237.76px;font-size:10.6px;transform:scaleX(0.9528);transform-origin:0 0;color:#000">3/11/20</div>
<div class="t" style="left:189.20px;top:257.23px;font-size:10.6px;transform:scaleX(0.9528);transform-origin:0 0;color:#000">12/16/18</div>
<div class="t" style="left:236.60px;top:257.23px;font-size:10.6px;transform:scaleX(0.9528);transform-origin:0 0;color:#000">3/30/20</div>
<div class="t" style="left:189.20px;top:276.70px;font-size:10.6px;transform:scaleX(0.9528);transform-origin:0 0;color:#000">12/12/19</div>
<div class="t" style="left:236.60px;top:276.70px;font-size:10.6px;transform:scaleX(0.9528);transform-origin:0 0;color:#000">1/2/20</div>
<div class="t" style="left:189.20px;top:296.17px;font-size:10.6px;transform:scaleX(0.9528);transform-origin:0 0;color:#000">3/31/20</div>
<div class="t" style="left:236.60px;top:296.17px;font-size:10.6px;transform:scaleX(0.9528);transform-origin:0 0;color:#000">5/14/20</div>
<div class="t" style="left:189.20px;top:315.64px;font-size:10.6px;transform:scaleX(0.9528);transform-origin:0 0;color:#000">5/15/20</div>
<div class="t" style="left:236.60px;top:315.64px;font-size:10.6px;transform:scaleX(0.9528);transform-origin:0 0;color:#000">7/9/20</div>
<div class="t" style="left:189.20px;top:335.11px;font-size:10.6px;transform:scaleX(0.9528);transform-origin:0 0;color:#000">12/21/18</div>
<div class="t" style="left:236.60px;top:335.11px;font-size:10.6px;transform:scaleX(0.9528);transform-origin:0 0;color:#000">2/28/20</div>
<div class="t" style="left:189.20px;top:354.58px;font-size:10.6px;transform:scaleX(0.9528);transform-origin:0 0;color:#000">2/18/20</div>
<div class="t" style="left:236.60px;top:354.58px;font-size:10.6px;transform:scaleX(0.9528);transform-origin:0 0;color:#000">8/10/20</div>
<div class="t" style="left:189.20px;top:374.05px;font-size:10.6px;transform:scaleX(0.9528);transform-origin:0 0;color:#000">7/10/20</div>
<div class="t" style="left:236.60px;top:374.05px;font-size:10.6px;transform:scaleX(0.9528);transform-origin:0 0;color:#000">8/13/20</div>
<div class="t" style="left:189.20px;top:393.52px;font-size:10.6px;transform:scaleX(0.9528);transform-origin:0 0;color:#000">7/10/20</div>
<div class="t" style="left:236.60px;top:393.52px;font-size:10.6px;transform:scaleX(0.9528);transform-origin:0 0;color:#000">8/27/20</div>
<div class="t" style="left:189.20px;top:412.99px;font-size:10.6px;transform:scaleX(0.9528);transform-origin:0 0;color:#000">7/10/20</div>
<div class="t" style="left:236.60px;top:412.99px;font-size:10.6px;transform:scaleX(0.9528);transform-origin:0 0;color:#000">9/17/20</div>
<div class="t" style="left:189.20px;top:432.46px;font-size:10.6px;transform:scaleX(0.9528);transform-origin:0 0;color:#000">7/10/20</div>
<div class="t" style="left:236.60px;top:432.46px;font-size:10.6px;transform:scaleX(0.9528);transform-origin:0 0;color:#000">10/22/20</div>
<div class="t" style="left:189.20px;top:451.93px;font-size:10.6px;transform:scaleX(0.9528);transform-origin:0 0;color:#000">10/23/20</div>
<div class="t" style="left:236.60px;top:451.93px;font-size:10.6px;transform:scaleX(0.9528);transform-origin:0 0;color:#000">12/31/20</div>
<div class="t" style="left:189.20px;top:471.40px;font-size:10.6px;transform:scaleX(0.9528);transform-origin:0 0;color:#000">1/1/21</div>
<div class="t" style="left:236.60px;top:471.40px;font-size:10.6px;transform:scaleX(0.9528);transform-origin:0 0;color:#000">5/6/21</div>
<div class="t" style="left:189.20px;top:490.87px;font-size:10.6px;transform:scaleX(0.9528);transform-origin:0 0;color:#000">5/6/21</div>
<div class="t" style="left:236.60px;top:490.87px;font-size:10.6px;transform:scaleX(0.9528);transform-origin:0 0;color:#000">5/6/21</div>
<div class="a" style="left:337.82px;top:219.31px;width:272.97px;height:16.50px;background:#077EC2;border:1px solid #0062A8"></div>
<div class="t" style="left:614.30px;top:222.19px;font-size:10.0px;transform:scaleX(0.9270);transform-origin:0 0;color:#1A1A1A;-webkit-text-stroke:0.1px #1A1A1A">ADONIS Subcontractor Selection</div>
<div class="a" style="left:561.79px;top:238.78px;width:63.20px;height:16.50px;background:#FDC113;border:1px solid #DDA00A"></div>
<div class="t" style="right:340.51px;top:241.66px;font-size:10.0px;transform:scaleX(0.9480);transform-origin:100% 0;color:#1A1A1A;-webkit-text-stroke:0.1px #1A1A1A">Engineering Team 1 Development</div>
<div class="a" style="left:345.23px;top:258.25px;width:291.48px;height:16.50px;background:#97579B;border:1px solid #74407A"></div>
<div class="t" style="left:640.21px;top:261.14px;font-size:10.0px;transform:scaleX(0.9480);transform-origin:0 0;color:#1A1A1A;-webkit-text-stroke:0.1px #1A1A1A">Engineering Team 2 Development</div>
<div class="a" style="left:567.96px;top:277.72px;width:14.46px;height:16.50px;background:#97579B;border:1px solid #74407A"></div>
<div class="t" style="left:585.92px;top:280.61px;font-size:10.0px;transform:scaleX(0.9440);transform-origin:0 0;color:#1A1A1A;-webkit-text-stroke:0.1px #1A1A1A">Resistance calibration</div>
<div class="a" style="left:348.31px;top:336.13px;width:269.27px;height:16.50px;background:#C21F23;border:1px solid #A0151A"></div>
<div class="t" style="left:621.09px;top:339.02px;font-size:10.0px;transform:scaleX(0.9080);transform-origin:0 0;color:#1A1A1A;-webkit-text-stroke:0.1px #1A1A1A">Create MERLIN Subsystem</div>
<div class="a" style="left:609.92px;top:355.60px;width:108.86px;height:16.50px;background:#70AD47;border:1px solid #5A9437"></div>
<div class="t" style="right:292.38px;top:358.49px;font-size:10.0px;transform:scaleX(0.9120);transform-origin:100% 0;color:#1A1A1A;-webkit-text-stroke:0.1px #1A1A1A">Create ADONIS Subsystem</div>
<div class="a" style="left:698.14px;top:375.07px;width:22.48px;height:16.50px;background:#C21F23;border:1px solid #A0151A"></div>
<div class="t" style="right:204.16px;top:377.95px;font-size:10.0px;transform:scaleX(0.9290);transform-origin:100% 0;color:#1A1A1A;-webkit-text-stroke:0.1px #1A1A1A">MERLIN Subcontractor Rework</div>
<div class="a" style="left:698.14px;top:394.54px;width:31.12px;height:16.50px;background:#70AD47;border:1px solid #5A9437"></div>
<div class="t" style="right:204.16px;top:397.43px;font-size:10.0px;transform:scaleX(0.9320);transform-origin:100% 0;color:#1A1A1A;-webkit-text-stroke:0.1px #1A1A1A">ADONIS Subcontractor Rework</div>
<div class="a" style="left:698.14px;top:414.01px;width:44.07px;height:16.50px;background:#FDC113;border:1px solid #DDA00A"></div>
<div class="t" style="right:204.16px;top:416.90px;font-size:10.0px;transform:scaleX(0.9380);transform-origin:100% 0;color:#1A1A1A;-webkit-text-stroke:0.1px #1A1A1A">Engineering Team 1 Rework</div>
<div class="a" style="left:698.14px;top:433.48px;width:65.67px;height:16.50px;background:#97579B;border:1px solid #74407A"></div>
<div class="t" style="right:204.16px;top:436.37px;font-size:10.0px;transform:scaleX(0.9380);transform-origin:100% 0;color:#1A1A1A;-webkit-text-stroke:0.1px #1A1A1A">Engineering Team 2 Rework</div>
<div class="a" style="left:762.93px;top:452.95px;width:44.07px;height:16.50px;background:#077EC2;border:1px solid #0062A8"></div>
<div class="t" style="right:139.37px;top:455.83px;font-size:10.0px;transform:scaleX(0.9620);transform-origin:100% 0;color:#1A1A1A;-webkit-text-stroke:0.1px #1A1A1A">Final Integration</div>
<div class="a" style="left:806.12px;top:472.42px;width:78.62px;height:16.50px;background:#077EC2;border:1px solid #0062A8"></div>
<div class="t" style="right:96.18px;top:475.31px;font-size:10.0px;transform:scaleX(0.9280);transform-origin:100% 0;color:#1A1A1A;-webkit-text-stroke:0.1px #1A1A1A">Betatest cycle</div>
<div class="a" style="left:338.22px;top:228.91px;width:136.00px;height:5.40px;background:#F5D22A"></div>
<div class="t" style="right:506.50px;top:163.78px;font-size:10.0px;transform:scaleX(0.9500);transform-origin:100% 0;color:#1A1A1A;-webkit-text-stroke:0.1px #1A1A1A">Resources</div>
<svg class="a" style="left:874.80px;top:490.40px" width="19" height="19"><path d="M9.5 0.8 L18.2 9.5 L9.5 18.2 L0.8 9.5Z" fill="#0A78C4" stroke="#0062A8" stroke-width="1"/></svg>
<div class="t" style="right:25.90px;top:494.78px;font-size:10.0px;transform:scaleX(0.9620);transform-origin:100% 0;color:#1A1A1A;-webkit-text-stroke:0.1px #1A1A1A">General Product Availability</div>
<div class="a" style="left:208.4px;top:78.2px;width:173.79999999999998px;height:153.0px;background:#fff;border:1px solid #A0A0A0;box-shadow:0 0 6px 1px rgba(0,0,0,0.25)"></div>
<svg class="a" style="left:213.3px;top:82.8px" width="9.5" height="8.5" viewBox="0 0 9.5 8.5">
<defs><linearGradient id="ig" x1="0" y1="0" x2="1" y2="1"><stop offset="0" stop-color="#B26FC0"/><stop offset="1" stop-color="#7A2C8E"/></linearGradient></defs>
<rect x="0" y="0" width="9.5" height="8.5" fill="url(#ig)"/><rect x="1.8" y="1.8" width="1.8" height="5" fill="#EBD2F0"/><path d="M4.6 2.3 h3.3 v1.8 h-1.5 v2.8 h-1.8z" fill="#EBD2F0"/></svg>
<div class="t" style="left:225.80px;top:84.07px;font-size:7.3px;transform:scaleX(0.9279);transform-origin:0 0;color:#1E1E1E">Row hiding choices</div>
<svg class="a" style="left:370.3px;top:83.6px" width="7" height="7"><path d="M0.5 0.5 L6.5 6.5 M6.5 0.5 L0.5 6.5" stroke="#333" stroke-width="0.9"/></svg>
<div class="t" style="left:210.00px;top:96.69px;font-size:6.8px;transform:scaleX(0.9305);transform-origin:0 0;color:#1E1E1E">Choose to hide empty rows in any of the following three</div>
<div class="t" style="left:210.00px;top:103.69px;font-size:6.8px;transform:scaleX(0.9296);transform-origin:0 0;color:#1E1E1E">regions of the graph:</div>
<div class="t" style="left:271.20px;top:117.19px;font-size:6.8px;transform:scaleX(0.9233);transform-origin:0 0;color:#1E1E1E">Number of empty rows found</div>
<div class="a" style="left:271.20px;top:123.20px;width:80.60px;height:0.80px;background:#555"></div>
<svg class="a" style="left:225.6px;top:131.2px" width="9" height="9" viewBox="0 0 9 9"><rect x="0.5" y="0.5" width="7.6" height="7.6" fill="#fff" stroke="#CFCFCF" stroke-width="0.9"/><path d="M1.6 4.2 L3.5 6.1 L7.1 2" fill="none" stroke="#C8C8C8" stroke-width="0.9"/></svg>
<div class="t" style="left:236.10px;top:132.22px;font-size:7px;transform:scaleX(0.9573);transform-origin:0 0;color:#8F8F8F">Top</div>
<svg class="a" style="left:225.6px;top:150.8px" width="9" height="9" viewBox="0 0 9 9"><rect x="0.5" y="0.5" width="7.6" height="7.6" fill="#fff" stroke="#333" stroke-width="0.9"/><path d="M1.6 4.2 L3.5 6.1 L7.1 2" fill="none" stroke="#222" stroke-width="0.9"/></svg>
<div class="t" style="left:236.10px;top:151.32px;font-size:7px;transform:scaleX(0.9143);transform-origin:0 0;color:#1E1E1E">Interior</div>
<svg class="a" style="left:225.6px;top:170.2px" width="9" height="9" viewBox="0 0 9 9"><rect x="0.5" y="0.5" width="7.6" height="7.6" fill="#fff" stroke="#CFCFCF" stroke-width="0.9"/><path d="M1.6 4.2 L3.5 6.1 L7.1 2" fill="none" stroke="#C8C8C8" stroke-width="0.9"/></svg>
<div class="t" style="left:236.30px;top:171.02px;font-size:7px;transform:scaleX(0.8756);transform-origin:0 0;color:#8F8F8F">Bottom</div>
<div class="a" style="left:293.20px;top:129.50px;width:33.80px;height:11.30px;border:1px solid #A8A8A8;background:#fff;border-radius:1px"></div>
<div class="t" style="left:295.00px;top:131.19px;font-size:6.8px;transform:scaleX(0.9256);transform-origin:0 0;color:#1E1E1E">0</div>
<div class="a" style="left:293.20px;top:148.90px;width:33.80px;height:11.30px;border:1px solid #A8A8A8;background:#fff;border-radius:1px"></div>
<div class="t" style="left:295.00px;top:150.59px;font-size:6.8px;transform:scaleX(0.9256);transform-origin:0 0;color:#1E1E1E">4</div>
<div class="a" style="left:293.20px;top:168.30px;width:33.80px;height:11.30px;border:1px solid #A8A8A8;background:#fff;border-radius:1px"></div>
<div class="t" style="left:295.00px;top:169.99px;font-size:6.8px;transform:scaleX(0.9256);transform-origin:0 0;color:#1E1E1E">0</div>
<svg class="a" style="left:217.2px;top:192.5px" width="9" height="9" viewBox="0 0 9 9"><rect x="0.5" y="0.5" width="7.6" height="7.6" fill="#fff" stroke="#333" stroke-width="0.9"/></svg>
<div class="t" style="left:227.10px;top:193.89px;font-size:6.8px;transform:scaleX(0.9294);transform-origin:0 0;color:#1E1E1E">Do not ask again.</div>
<div class="t" style="left:282.00px;top:193.89px;font-size:6.8px;transform:scaleX(0.9276);transform-origin:0 0;color:#1E1E1E">Use these choices in the future.</div>
<div class="a" style="left:293.70px;top:211.50px;width:37.00px;height:11.30px;border:1px solid #2F7BD8;background:#E6E6E6"></div>
<div class="t" style="left:307.30px;top:214.19px;font-size:6.8px;transform:scaleX(0.9376);transform-origin:0 0;color:#1E1E1E">OK</div>
<div class="a" style="left:335.30px;top:211.50px;width:37.40px;height:11.30px;border:1px solid #ADADAD;background:#E6E6E6"></div>
<div class="t" style="left:344.50px;top:214.19px;font-size:6.8px;transform:scaleX(0.8974);transform-origin:0 0;color:#1E1E1E">Cancel</div>
<svg class="a" style="left:0;top:0" width="900" height="511"><rect x="110.5" y="-2" width="49.69999999999999" height="22.3" fill="none" stroke="#FF3B3B" stroke-width="1.8"/><rect x="25" y="45.3" width="52.599999999999994" height="22.0" fill="none" stroke="#FF3B3B" stroke-width="1.8"/><rect x="211.5" y="79.3" width="83.30000000000001" height="15.900000000000006" fill="none" stroke="#FF3B3B" stroke-width="1.8"/><rect x="209.4" y="144" width="134.1" height="21.19999999999999" fill="none" stroke="#FF3B3B" stroke-width="1.8"/><rect x="186.5" y="178" width="21.5" height="40" fill="none" stroke="#FF3B3B" stroke-width="1.8"/><rect x="384" y="178.1" width="514.3" height="39.30000000000001" fill="none" stroke="#FF3B3B" stroke-width="1.8"/><rect x="187.8" y="296.3" width="710.5" height="38.599999999999966" fill="none" stroke="#FF3B3B" stroke-width="1.8"/><line x1="120.1" y1="21.3" x2="84.0864912870749" y2="43.421319848234084" stroke="#FF3B3B" stroke-width="2"/><path d="M79.40 46.30 L82.57 40.95 L85.60 45.89Z" fill="#FF3B3B"/><line x1="77.6" y1="66.5" x2="203.0767490044161" y2="87.68438619555076" stroke="#FF3B3B" stroke-width="2"/><path d="M208.50 88.60 L202.59 90.54 L203.56 84.82Z" fill="#FF3B3B"/><line x1="324" y1="155" x2="381.35083342145884" y2="182.80088554298646" stroke="#FF3B3B" stroke-width="2"/><path d="M386.30 185.20 L380.09 185.41 L382.62 180.19Z" fill="#FF3B3B"/><line x1="324" y1="155" x2="356.0186318972076" y2="288.65134635771335" stroke="#FF3B3B" stroke-width="2"/><path d="M357.30 294.00 L353.20 289.33 L358.84 287.98Z" fill="#FF3B3B"/><path d="M17.5 89.9 L31.6 89.9 L36 68 L51.7 89.9 L168 89.9 Q174 89.9 174 96 L174 124.6 Q174 130.6 168 130.6 L17.5 130.6 Q11.6 130.6 11.6 124.6 L11.6 96 Q11.6 89.9 17.5 89.9Z" fill="#fff" stroke="#FF3B3B" stroke-width="2.2"/><path d="M397.7 77 L622 77 Q628 77 628 83 L628 117.6 Q628 123.6 622 123.6 L494 123.6 L343.5 144 L423 123.6 L397.7 123.6 Q391.7 123.6 391.7 117.6 L391.7 83 Q391.7 77 397.7 77Z" fill="#fff" stroke="#FF3B3B" stroke-width="2.2"/></svg>
<div class="t" style="left:11.60px;top:97.80px;font-size:11px;color:#1a1a1a;text-align:center;line-height:13px"><div style="width:162.4px">Click Here to Access the Row<br>hiding choices form.</div></div>
<div class="t" style="left:391.70px;top:87.90px;font-size:11px;color:#1a1a1a;text-align:center;line-height:13px"><div style="width:236.3px;font-size:10.8px">The Row hiding choices Form Shows That<br>There Are Four (4) Empty Interior Row.</div></div>
</div></body></html>
